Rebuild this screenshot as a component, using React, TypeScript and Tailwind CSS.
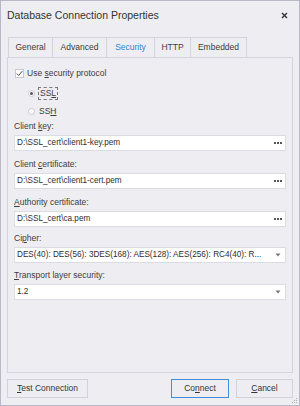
import type { ReactNode } from "react";

const FONT = { fontFamily: '"Liberation Sans", Arial, sans-serif' };

const TABS = [
  { label: "General", width: "w-[45px]" },
  { label: "Advanced", width: "w-[54px]" },
  { label: "Security", width: "w-[48px]", active: true },
  { label: "HTTP", width: "w-[36px]" },
  { label: "Embedded", width: "w-[56px]" },
];

function U({ children }: { children: ReactNode }) {
  return <span className="underline underline-offset-[1px]">{children}</span>;
}

function Label({ children }: { children: ReactNode }) {
  return <div className="h-[12px] leading-[12px] text-[8.5px] text-[#3c3c3c]">{children}</div>;
}

function PathInput({ value }: { value: string }) {
  return (
    <div className="mt-[3px] flex h-[16px] items-center border border-[#dcdbe3] bg-white pl-[2px] pr-[3px] text-[8.2px] text-[#2e2e2e]">
      <span className="flex-1 truncate">{value}</span>
      <span className="flex gap-[1px]">
        <span className="size-[2px] bg-[#555]" />
        <span className="size-[2px] bg-[#555]" />
        <span className="size-[2px] bg-[#555]" />
      </span>
    </div>
  );
}

function Combo({ value }: { value: string }) {
  return (
    <div className="mt-[3px] flex h-[16px] items-center border border-[#dcdbe3] bg-white pl-[2px] pr-[4px] text-[8.2px] text-[#2e2e2e]">
      <span className="flex-1 overflow-hidden whitespace-nowrap">{value}</span>
      <svg width="6" height="4" viewBox="0 0 6 4" className="ml-[6px] shrink-0">
        <path d="M0.5 0.5 L5.5 0.5 L3 3.5 Z" fill="#777" />
      </svg>
    </div>
  );
}

export default function App() {
  return (
    <div
      style={FONT}
      className="flex h-[406px] w-[300px] flex-col border border-[#b9b8c8] bg-[#eeeef2] text-[#3c3c3c]"
    >
      <div className="flex h-[29px] items-center justify-between pl-[6px] pr-[11px]">
        <span className="text-[10.5px] text-[#333]">Database Connection Properties</span>
        <svg width="7" height="7" viewBox="0 0 7 7">
          <path d="M1 1 L6 6 M6 1 L1 6" stroke="#333" strokeWidth="1.4" />
        </svg>
      </div>

      <div className="mt-[7px] flex pl-[7px]">
        {TABS.map((t, i) => (
          <div
            key={t.label}
            className={`flex h-[20px] items-center justify-center border-t border-r border-[#d5d4dc] text-[8.5px] ${t.width} ${
              i === 0 ? "border-l" : ""
            } ${t.active ? "text-[#2b87d9]" : "text-[#3c3c3c]"}`}
          >
            {t.label}
          </div>
        ))}
      </div>

      <div className="mx-[6px] flex h-[316px] flex-col border border-[#d5d4dc] px-[6px]">
        <div className="mt-[10px] flex h-[10px] items-center pl-[1px]">
          <span className="flex size-[9px] items-center justify-center border border-[#c9c8d0] bg-white">
            <svg width="7" height="7" viewBox="0 0 7 7">
              <path d="M0.8 3.6 L2.7 5.5 L6.3 1.2" stroke="#444" strokeWidth="1" fill="none" />
            </svg>
          </span>
          <span className="ml-[3px] text-[8.5px]">
            Use <U>s</U>ecurity protocol
          </span>
        </div>

        <div className="mt-[8px] flex h-[14px] items-center pl-[14px]">
          <span className="flex size-[7px] items-center justify-center rounded-full border border-[#c9c8d0] bg-white">
            <span className="size-[3px] rounded-full bg-[#555]" />
          </span>
          <span className="ml-[3px] border border-dashed border-[#777] px-[1px] text-[8.5px] leading-[11px]">
            SS<U>L</U>
          </span>
        </div>

        <div className="mt-[4px] flex h-[14px] items-center pl-[14px]">
          <span className="size-[7px] rounded-full border border-[#c9c8d0] bg-white" />
          <span className="ml-[4px] text-[8.5px]">
            SS<U>H</U>
          </span>
        </div>

        <div className="mt-[2px]">
          <Label>
            Client <U>k</U>ey:
          </Label>
          <PathInput value="D:\SSL_cert\client1-key.pem" />
        </div>

        <div className="mt-[7px]">
          <Label>
            Client <U>c</U>ertificate:
          </Label>
          <PathInput value="D:\SSL_cert\client1-cert.pem" />
        </div>

        <div className="mt-[7px]">
          <Label>
            <U>A</U>uthority certificate:
          </Label>
          <PathInput value="D:\SSL_cert\ca.pem" />
        </div>

        <div className="mt-[5px]">
          <Label>
            Ci<U>p</U>her:
          </Label>
          <Combo value="DES(40): DES(56): 3DES(168): AES(128): AES(256): RC4(40): R..." />
        </div>

        <div className="mt-[6px]">
          <Label>
            <U>T</U>ransport layer security:
          </Label>
          <Combo value="1.2" />
        </div>
      </div>

      <div className="mx-[6px] mt-[6px] flex h-[19px] items-stretch text-[8.5px] text-[#333]">
        <div className="flex w-[81px] items-center justify-center border border-[#d3d2da]">
          <span>
            <U>T</U>est Connection
          </span>
        </div>
        <div className="flex-1" />
        <div className="flex w-[58px] items-center justify-center border border-[#3d8fdc]">
          <span>
            Co<U>n</U>nect
          </span>
        </div>
        <div className="ml-[7px] flex w-[57px] items-center justify-center border border-[#d3d2da]">
          <span>
            <U>C</U>ancel
          </span>
        </div>
      </div>

      <div className="relative flex-1">
        <svg width="6" height="6" viewBox="0 0 6 6" className="absolute right-[1px] bottom-[1px]">
          <rect x="4" y="0" width="1" height="1" fill="#aaa" />
          <rect x="2" y="2" width="1" height="1" fill="#aaa" />
          <rect x="4" y="2" width="1" height="1" fill="#aaa" />
          <rect x="0" y="4" width="1" height="1" fill="#aaa" />
          <rect x="2" y="4" width="1" height="1" fill="#aaa" />
          <rect x="4" y="4" width="1" height="1" fill="#aaa" />
        </svg>
      </div>
    </div>
  );
}
